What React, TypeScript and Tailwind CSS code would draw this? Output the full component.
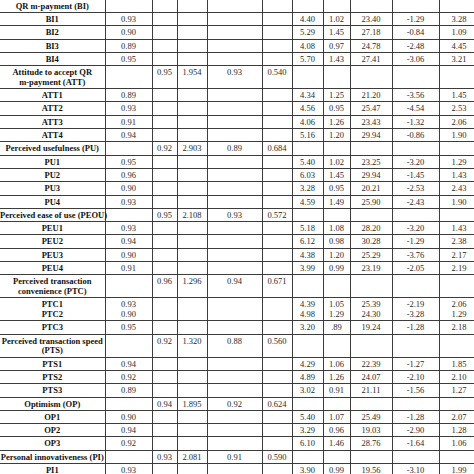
type Row = {
  label: string[]
  group?: boolean
  load?: string[]
  stats?: string[]
  items?: string[][]
}

const rows: Row[] = [
  { label: ['Behavioral intention to use', 'QR m-payment (BI)'], group: true, stats: ['', '', '', ''] },
  { label: ['BI1'], load: ['0.93'], items: [['4.40'], ['1.02'], ['23.40'], ['-1.29'], ['3.28']] },
  { label: ['BI2'], load: ['0.90'], items: [['5.29'], ['1.45'], ['27.18'], ['-0.84'], ['1.09']] },
  { label: ['BI3'], load: ['0.89'], items: [['4.08'], ['0.97'], ['24.78'], ['-2.48'], ['4.45']] },
  { label: ['BI4'], load: ['0.95'], items: [['5.70'], ['1.43'], ['27.41'], ['-3.06'], ['3.21']] },
  { label: ['Attitude to accept QR', 'm-payment (ATT)'], group: true, stats: ['0.95', '1.954', '0.93', '0.540'] },
  { label: ['ATT1'], load: ['0.89'], items: [['4.34'], ['1.25'], ['21.20'], ['-3.56'], ['1.45']] },
  { label: ['ATT2'], load: ['0.93'], items: [['4.56'], ['0.95'], ['25.47'], ['-4.54'], ['2.53']] },
  { label: ['ATT3'], load: ['0.91'], items: [['4.06'], ['1.26'], ['23.43'], ['-1.32'], ['2.06']] },
  { label: ['ATT4'], load: ['0.94'], items: [['5.16'], ['1.20'], ['29.94'], ['-0.86'], ['1.90']] },
  { label: ['Perceived usefulness (PU)'], group: true, stats: ['0.92', '2.903', '0.89', '0.684'] },
  { label: ['PU1'], load: ['0.95'], items: [['5.40'], ['1.02'], ['23.25'], ['-3.20'], ['1.29']] },
  { label: ['PU2'], load: ['0.96'], items: [['6.03'], ['1.45'], ['29.94'], ['-1.45'], ['1.43']] },
  { label: ['PU3'], load: ['0.90'], items: [['3.28'], ['0.95'], ['20.21'], ['-2.53'], ['2.43']] },
  { label: ['PU4'], load: ['0.93'], items: [['4.59'], ['1.49'], ['25.90'], ['-2.43'], ['1.90']] },
  { label: ['Perceived ease of use (PEOU)'], group: true, stats: ['0.95', '2.108', '0.93', '0.572'] },
  { label: ['PEU1'], load: ['0.93'], items: [['5.18'], ['1.08'], ['28.20'], ['-3.20'], ['1.43']] },
  { label: ['PEU2'], load: ['0.94'], items: [['6.12'], ['0.98'], ['30.28'], ['-1.29'], ['2.38']] },
  { label: ['PEU3'], load: ['0.90'], items: [['4.38'], ['1.20'], ['25.29'], ['-3.76'], ['2.17']] },
  { label: ['PEU4'], load: ['0.91'], items: [['3.99'], ['0.99'], ['23.19'], ['-2.05'], ['2.19']] },
  { label: ['Perceived transaction', 'convenience (PTC)'], group: true, stats: ['0.96', '1.296', '0.94', '0.671'] },
  {
    label: ['PTC1', 'PTC2'],
    load: ['0.93', '0.90'],
    items: [['4.39', '4.98'], ['1.05', '1.29'], ['25.39', '24.30'], ['-2.19', '-3.28'], ['2.06', '1.29']],
  },
  { label: ['PTC3'], load: ['0.95'], items: [['3.20'], ['.89'], ['19.24'], ['-1.28'], ['2.18']] },
  { label: ['Perceived transaction speed', '(PTS)'], group: true, stats: ['0.92', '1.320', '0.88', '0.560'] },
  { label: ['PTS1'], load: ['0.94'], items: [['4.29'], ['1.06'], ['22.39'], ['-1.27'], ['1.85']] },
  { label: ['PTS2'], load: ['0.92'], items: [['4.89'], ['1.26'], ['24.07'], ['-2.10'], ['2.10']] },
  { label: ['PTS3'], load: ['0.89'], items: [['3.02'], ['0.91'], ['21.11'], ['-1.56'], ['1.27']] },
  { label: ['Optimism (OP)'], group: true, stats: ['0.94', '1.895', '0.92', '0.624'] },
  { label: ['OP1'], load: ['0.90'], items: [['5.40'], ['1.07'], ['25.49'], ['-1.28'], ['2.07']] },
  { label: ['OP2'], load: ['0.94'], items: [['3.29'], ['0.96'], ['19.03'], ['-2.90'], ['1.28']] },
  { label: ['OP3'], load: ['0.92'], items: [['6.10'], ['1.46'], ['28.76'], ['-1.64'], ['1.06']] },
  { label: ['Personal innovativeness (PI)'], group: true, stats: ['0.93', '2.081', '0.91', '0.590'] },
  { label: ['PI1'], load: ['0.93'], items: [['3.90'], ['0.99'], ['19.56'], ['-3.10'], ['1.99']] },
]

const widths = [105, 47, 25, 30, 55, 30, 31, 27, 42, 47, 40]

const cell = 'border border-[#3c3c3c] px-0 pt-[2px] pb-0 align-top text-center leading-[9.5px] whitespace-nowrap'

function Lines({ values }: { values: string[] }) {
  return (
    <>
      {values.map((v, i) => (
        <div key={i}>{v}</div>
      ))}
    </>
  )
}

export default function App() {
  return (
    <div className="h-[474px] w-[474px] overflow-hidden bg-white font-['Liberation_Serif','Times_New_Roman',serif] text-[#2a2a2a]">
      <table className="mt-[-11px] table-fixed border-collapse text-[8.5px]" style={{ width: 479 }}>
        <colgroup>
          {widths.map((w, i) => (
            <col key={i} style={{ width: w }} />
          ))}
        </colgroup>
        <tbody>
          {rows.map((r, i) => {
            const tall = r.label.length > 1
            const h = tall ? 'h-[23px]' : 'h-[13.3px]'
            return (
              <tr key={i}>
                <td className={`${cell} ${h} border-l-0 font-bold text-[#111]`}>
                  <Lines values={r.label} />
                </td>
                <td className={cell}>{r.load && <Lines values={r.load} />}</td>
                {[0, 1, 2, 3].map((k) => (
                  <td key={k} className={cell}>
                    {r.stats ? r.stats[k] : ''}
                  </td>
                ))}
                {[0, 1, 2, 3, 4].map((k) => (
                  <td key={k} className={cell}>
                    {r.items && <Lines values={r.items[k]} />}
                  </td>
                ))}
              </tr>
            )
          })}
        </tbody>
      </table>
    </div>
  )
}
